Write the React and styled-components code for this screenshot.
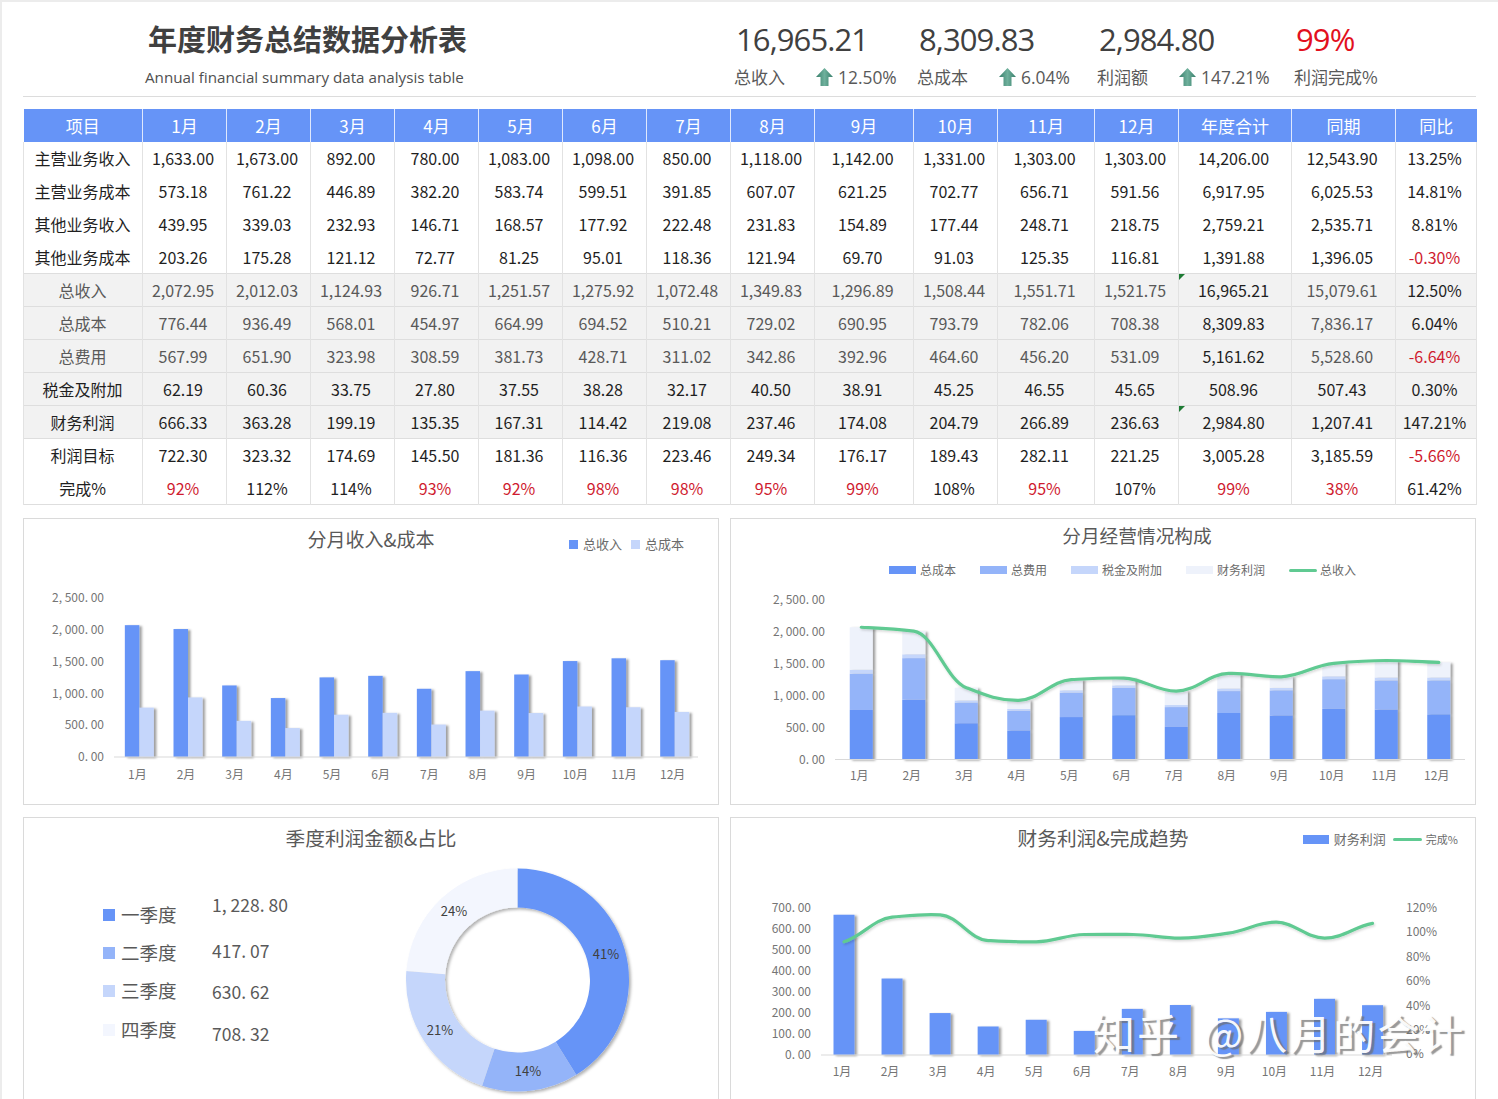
import React from 'react';
import styled, { createGlobalStyle } from 'styled-components';

const FONT = `"Noto Sans CJK SC", "Noto Sans", sans-serif`;
const MONTHS = ['1月','2月','3月','4月','5月','6月','7月','8月','9月','10月','11月','12月'];
const C = { a:'#6694f7', b:'#94b4f9', c:'#c5d6fb', d:'#eef2fb', e:'#f3f6fe', line:'#60ca92' };

const Global = createGlobalStyle`
  html, body { margin:0; padding:0; background:#fff; }
  body { font-family:${FONT}; color:#262626; }
`;
const Page = styled.div`
  position:relative; box-sizing:border-box; width:1498px; height:1099px; overflow:hidden; background:#fff;
  border-top:2px solid #ececec; border-left:2px solid #ececec; padding:0 22px 0 21px;
`;
const Header = styled.header`
  display:flex; height:95px; box-sizing:border-box; border-bottom:1px solid #dcdcdc;
`;
const TitleBlock = styled.div`
  width:711px; box-sizing:border-box; padding:13px 0 0 125px; display:flex; flex-direction:column;
`;
const MainTitle = styled.h1`
  margin:0; font-size:29px; line-height:46px; font-weight:700; color:#404040; white-space:nowrap;
`;
const SubTitle = styled.div`
  margin:5px 0 0 -3px; font:400 15.2px/22px "Open Sans", sans-serif; color:#505050; white-space:nowrap;
`;
const Kpis = styled.div`display:flex;`;
const Kpi = styled.div`
  width:${p=>p.$w}px; display:flex; flex-direction:column; padding-top:15px;
`;
const KpiValue = styled.div`
  margin-left:2px; font:400 31px/44px "Open Sans", ${FONT}; letter-spacing:-.9px;
  color:${p=>p.$red?'#e2101e':'#404040'}; white-space:nowrap;
`;
const KpiRow = styled.div`
  margin-top:4px; display:flex; align-items:center; font-size:17px; line-height:24px; color:#595959; white-space:nowrap;
`;
const KpiLabel = styled.span`width:${p=>p.$w||82}px;`;
const KpiPct = styled.span`margin-left:5px;font:400 17.4px/24px "Open Sans",sans-serif;`;

const Table = styled.table`
  margin-top:12px; width:1453px; table-layout:fixed; border-collapse:collapse; font-size:16px;
`;
const Th = styled.th`
  height:33px; padding:0; background:#6694f7; color:#fff; font-weight:400; font-size:17px;
  border-left:1px solid #dfe8fd; border-right:1px solid #dfe8fd;
  &:first-child{border-left:0;} &:last-child{border-right:0;}
`;
const Tr = styled.tr`
  background:${p=>p.$gray?'#f2f2f2':'#fff'};
  border-bottom:1px solid ${p=>p.$line?'#dedede':'transparent'};
`;
const Td = styled.td`
  position:relative; height:32px; padding:0 3px 0 0; text-align:center; white-space:nowrap; line-height:1;
  border-left:1px solid #e2e2e2; border-right:1px solid #e2e2e2;
  color:${p=>p.$red?'#cf1b2f':p.$muted?'#595959':'#1f1f1f'};
  &:first-child{padding-right:1px;}
`;
const Corner = styled.i`
  position:absolute; left:0; top:0; width:0; height:0;
  border-top:6px solid #1e7b34; border-right:6px solid transparent;
`;
const Charts = styled.div`
  margin-top:13px; display:grid; grid-template-columns:696px 746px; grid-auto-rows:287px; gap:12px 11px;
`;
const Panel = styled.section`
  box-sizing:border-box; border:1px solid #dadada; background:#fff; display:flex; flex-direction:column; overflow:hidden;
`;
const Head = styled.div`
  box-sizing:border-box; display:grid; grid-template-columns:1fr auto 1fr; align-items:start;
  padding:${p=>p.$top}px 0 0 ${p=>p.$shift||0}px; ${p=>p.$h?`height:${p.$h}px;`:''}
`;
const ChartTitle = styled.h2`
  grid-column:2; margin:0; font-size:${p=>p.$size||19}px; line-height:28px; font-weight:400; color:#595959; white-space:nowrap;
`;
const Legend = styled.div`
  display:flex; align-items:center; font-size:13px; line-height:14px; color:#6b6b6b; white-space:nowrap;
`;
const CornerLegend = styled(Legend)`
  grid-column:3; justify-self:end; margin-top:${p=>p.$mt}px; padding-right:${p=>p.$pr}px;
`;
const WideLegend = styled(Legend)`
  margin:14px 0 8px 158px; font-size:12px;
`;
const SmallEntry = styled.span`font-size:11px;`;
const Key = styled.span`
  display:inline-block; width:${p=>p.$w}px; height:${p=>p.$h}px; background:${p=>p.$c}; margin:0 ${p=>p.$gap}px 0 ${p=>p.$ml||0}px; flex:none;
  border-radius:${p=>p.$round?'2px':'0'};
`;
const Plot = styled.svg`display:block; flex:none;`;
const Axis = styled.text`
  font-family:${FONT}; font-size:12px; font-weight:400; fill:#757575;
`;
const Pct = styled.text`
  font-family:${FONT}; font-size:13px; font-weight:400; fill:#404040; text-anchor:middle;
`;
const Big = styled.text`
  font-family:${FONT}; font-size:${p=>p.$size}px; font-weight:400; fill:#595959;
`;
const Watermark = styled.div`
  position:absolute; left:1091px; top:1000px; font-size:42px; line-height:60px; font-weight:400; white-space:nowrap;
  letter-spacing:2px; word-spacing:11px;
  color:rgba(255,255,255,.94); text-shadow:3px 2px 1px rgba(110,110,110,.7);
`;

const R = (label, vals, o={}) => ({ label, vals, ...o });
const rows = [
 R('主营业务收入','1,633.00 1,673.00 892.00 780.00 1,083.00 1,098.00 850.00 1,118.00 1,142.00 1,331.00 1,303.00 1,303.00 14,206.00 12,543.90 13.25%'),
 R('主营业务成本','573.18 761.22 446.89 382.20 583.74 599.51 391.85 607.07 621.25 702.77 656.71 591.56 6,917.95 6,025.53 14.81%'),
 R('其他业务收入','439.95 339.03 232.93 146.71 168.57 177.92 222.48 231.83 154.89 177.44 248.71 218.75 2,759.21 2,535.71 8.81%'),
 R('其他业务成本','203.26 175.28 121.12 72.77 81.25 95.01 118.36 121.94 69.70 91.03 125.35 116.81 1,391.88 1,396.05 -0.30%',{line:1}),
 R('总收入','2,072.95 2,012.03 1,124.93 926.71 1,251.57 1,275.92 1,072.48 1,349.83 1,296.89 1,508.44 1,551.71 1,521.75 16,965.21 15,079.61 12.50%',{gray:1,line:1,muted:1,mark:1}),
 R('总成本','776.44 936.49 568.01 454.97 664.99 694.52 510.21 729.02 690.95 793.79 782.06 708.38 8,309.83 7,836.17 6.04%',{gray:1,line:1,muted:1}),
 R('总费用','567.99 651.90 323.98 308.59 381.73 428.71 311.02 342.86 392.96 464.60 456.20 531.09 5,161.62 5,528.60 -6.64%',{gray:1,line:1,muted:1}),
 R('税金及附加','62.19 60.36 33.75 27.80 37.55 38.28 32.17 40.50 38.91 45.25 46.55 45.65 508.96 507.43 0.30%',{gray:1,line:1}),
 R('财务利润','666.33 363.28 199.19 135.35 167.31 114.42 219.08 237.46 174.08 204.79 266.89 236.63 2,984.80 1,207.41 147.21%',{gray:1,line:1,mark:1}),
 R('利润目标','722.30 323.32 174.69 145.50 181.36 116.36 223.46 249.34 176.17 189.43 282.11 221.25 3,005.28 3,185.59 -5.66%'),
 R('完成%','92% 112% 114% 93% 92% 98% 98% 95% 99% 108% 95% 107% 99% 38% 61.42%',{line:1,done:1}),
].map(r=>({...r, vals:r.vals.split(' ')}));
const heads = ['项目',...MONTHS,'年度合计','同期','同比'];
const widths = [119,84,84,84,84,84,84,84,84,99,84,97,84,113,104,81];

const num = s => parseFloat(s.replace(/,/g,''));
const revenue = rows[4].vals.slice(0,12).map(num);
const cost = rows[5].vals.slice(0,12).map(num);
const fee = rows[6].vals.slice(0,12).map(num);
const tax = rows[7].vals.slice(0,12).map(num);
const profit = rows[8].vals.slice(0,12).map(num);
const done = rows[10].vals.slice(0,12).map(num);

// Monotone cubic through the data points: flat where the trend turns, as the reference's smooth lines are
const smooth = pts => {
  const n = pts.length;
  const sl = pts.slice(1).map((p,i)=>(p[1]-pts[i][1])/(p[0]-pts[i][0]));
  const t = pts.map((_,i)=>{
    if(i===0) return sl[0]*.6;
    if(i===n-1) return sl[n-2]*.6;
    const a=sl[i-1], b=sl[i];
    if(a*b<=0) return (a+b)*.12;
    return 2*a*b/(a+b);
  });
  return pts.reduce((d,p,i)=>{
    if(i===0) return `M${p[0]} ${p[1]}`;
    const q=pts[i-1], h=(p[0]-q[0])/2.6;
    return `${d} C${(q[0]+h).toFixed(1)} ${(q[1]+t[i-1]*h).toFixed(1)} ${(p[0]-h).toFixed(1)} ${(p[1]-t[i]*h).toFixed(1)} ${p[0].toFixed(1)} ${p[1].toFixed(1)}`;
  },'');
};

const Shadow = ({id}) => (
  <filter id={id} x="-40%" y="-10%" width="190%" height="125%">
    <feDropShadow dx="2.5" dy="1" stdDeviation="1.2" floodColor="#000" floodOpacity=".38"/>
  </filter>
);
const LineShadow = ({id}) => (
  <filter id={id} x="-5%" y="-20%" width="110%" height="150%">
    <feDropShadow dx="1" dy="1.5" stdDeviation="1" floodColor="#000" floodOpacity=".16"/>
  </filter>
);

const Arrow = () => (
  <svg width="17" height="18" viewBox="0 0 17 18" style={{flex:'none'}}>
    <defs><linearGradient id="ag"><stop offset="0" stopColor="#387f6b"/><stop offset=".5" stopColor="#6fb09c"/><stop offset="1" stopColor="#387f6b"/></linearGradient></defs>
    <path d="M8.5 0 L17 9 L12.5 9 L12.5 18 L4.5 18 L4.5 9 L0 9 Z" fill="url(#ag)"/>
  </svg>
);

const KpiCell = ({w,lw,value,label,pct,red}) => (
  <Kpi $w={w}>
    <KpiValue $red={red}>{value}</KpiValue>
    <KpiRow>
      <KpiLabel $w={lw}>{label}</KpiLabel>
      {pct && <Arrow/>}
      {pct && <KpiPct>{pct}</KpiPct>}
    </KpiRow>
  </Kpi>
);

const YLabels = ({items,x,anchor='end'}) => items.map(([t,y])=><Axis key={t} x={x} y={y+4} textAnchor={anchor}>{t}</Axis>);
const XLabels = ({cx,y}) => MONTHS.map((m,i)=><Axis key={m} x={cx(i)} y={y} textAnchor="middle">{m}</Axis>);

const Chart1 = () => {
  const Y = v => 757 - v*0.0636, cx = i => 114+48.67*(i+.5);
  return (
    <Plot width="694" height="229" viewBox="24 575 694 229">
      <defs><Shadow id="s1"/></defs>
      <YLabels x={104} items={[['2, 500. 00',598],['2, 000. 00',630],['1, 500. 00',662],['1, 000. 00',693.5],['500. 00',725],['0. 00',757]]}/>
      <g filter="url(#s1)">
        {revenue.map((v,i)=><rect key={i} x={cx(i)-13.5} y={Y(v)} width="14.5" height={757-Y(v)} fill={C.a}/>)}
      </g>
      <g filter="url(#s1)">
        {cost.map((v,i)=><rect key={i} x={cx(i)+1} y={Y(v)} width="14.5" height={757-Y(v)} fill={C.c}/>)}
      </g>
      <line x1="114" x2="698" y1="757" y2="757" stroke="#d9d9d9"/>
      <XLabels cx={i=>cx(i)-1} y={779}/>
    </Plot>
  );
};

const Chart2 = () => {
  const Y0 = 759.5, s = 0.0638, cx = i => 835+52.5*(i+.5);
  const series = [[cost,C.a],[fee,C.b],[tax,C.c],[profit,C.d]];
  return (
    <Plot width="744" height="219" viewBox="731 585 744 219">
      <defs><Shadow id="s2"/><LineShadow id="l2"/></defs>
      <YLabels x={825} items={[['2, 500. 00',600],['2, 000. 00',632],['1, 500. 00',664],['1, 000. 00',696],['500. 00',728],['0. 00',760]]}/>
      {MONTHS.map((m,i)=>{
        let base = 0;
        return <g key={m} filter="url(#s2)">{series.map(([arr,col],j)=>{
          const y = Y0-(base+arr[i])*s, h = arr[i]*s; base+=arr[i];
          return <rect key={j} x={cx(i)-11.5} y={y} width="23" height={h} fill={col}/>;
        })}</g>;
      })}
      <line x1="835" x2="1465" y1="759.5" y2="759.5" stroke="#d9d9d9"/>
      <path d={smooth(revenue.map((v,i)=>[cx(i),Y0-v*s]))} fill="none" stroke={C.line} strokeWidth="3.2" strokeLinecap="round" filter="url(#l2)"/>
      <XLabels cx={i=>cx(i)-2} y={780}/>
    </Plot>
  );
};

const Chart4 = () => {
  const Y0 = 1055, cx = i => 844+48.05*i, Y = v => Y0 - v*0.2105, P = v => Y0 - v*1.23;
  return (
    <Plot width="744" height="243" viewBox="731 860 744 243">
      <defs><Shadow id="s4"/><LineShadow id="l4"/></defs>
      <YLabels x={811} items={[['700. 00',907.5],['600. 00',928.5],['500. 00',949.5],['400. 00',970.5],['300. 00',991.5],['200. 00',1012.5],['100. 00',1033.5],['0. 00',1055]]}/>
      <g filter="url(#s4)">
        {profit.map((v,i)=><rect key={i} x={cx(i)-10.5} y={Y(v)} width="21" height={Y0-Y(v)} fill={C.a}/>)}
      </g>
      <line x1="821" x2="1392" y1="1055" y2="1055" stroke="#d9d9d9"/>
      <path d={smooth(done.map((v,i)=>[cx(i),P(v)]))} fill="none" stroke={C.line} strokeWidth="3.2" strokeLinecap="round" filter="url(#l4)"/>
      <YLabels x={1406} anchor="start" items={[['120%',907.5],['100%',932],['80%',956.5],['60%',981],['40%',1005.5],['20%',1030],['0%',1054]]}/>
      <XLabels cx={i=>cx(i)-2} y={1076}/>
    </Plot>
  );
};

const sector = (a0,a1,cx,cy,ro,ri) => {
  const pt=(a,r)=>[cx+r*Math.sin(a*2*Math.PI),cy-r*Math.cos(a*2*Math.PI)].map(n=>n.toFixed(2)).join(' ');
  const large = a1-a0>.5?1:0;
  return `M${pt(a0,ro)} A${ro} ${ro} 0 ${large} 1 ${pt(a1,ro)} L${pt(a1,ri)} A${ri} ${ri} 0 ${large} 0 ${pt(a0,ri)} Z`;
};
const quarters = [
  ['一季度','1, 228. 80',C.a,.4117,915,905],
  ['二季度','417. 07',C.b,.1397,953,951],
  ['三季度','630. 62',C.c,.2113,991,992],
  ['四季度','708. 32',C.e,.2373,1030,1034],
];
const Chart3 = () => {
  let acc = 0;
  return (
    <Plot width="694" height="243" viewBox="24 860 694 243">
      <defs><filter id="s3" x="-10%" y="-10%" width="125%" height="125%"><feDropShadow dx="2" dy="2" stdDeviation="1.6" floodColor="#000" floodOpacity=".3"/></filter></defs>
      {quarters.map(([n,v,c,,ly,vy])=>(
        <g key={n}>
          <rect x="103" y={ly-6} width="12" height="12" fill={c}/>
          <Big $size={18.5} x="121" y={ly+7}>{n}</Big>
          <Big $size={17.5} x="212" y={vy+7}>{v}</Big>
        </g>
      ))}
      <g filter="url(#s3)">
        {quarters.map(([n,,c,f])=>{ const d = sector(acc,acc+f,517.5,980,111.5,72.5); acc+=f; return <path key={n} d={d} fill={c}/>; })}
      </g>
      <Pct x="606" y="959">41%</Pct>
      <Pct x="528" y="1076">14%</Pct>
      <Pct x="440" y="1035">21%</Pct>
      <Pct x="454" y="916">24%</Pct>
    </Plot>
  );
};

export default function App(){
  return (
    <Page>
      <Global/>
      <Header>
        <TitleBlock>
          <MainTitle>年度财务总结数据分析表</MainTitle>
          <SubTitle>Annual financial summary data analysis table</SubTitle>
        </TitleBlock>
        <Kpis>
          <KpiCell w={183} value="16,965.21" label="总收入" pct="12.50%"/>
          <KpiCell w={180} value="8,309.83" label="总成本" pct="6.04%"/>
          <KpiCell w={197} value="2,984.80" label="利润额" pct="147.21%"/>
          <KpiCell w={120} value="99%" label="利润完成%" lw={100} red/>
        </Kpis>
      </Header>
      <Table>
        <colgroup>{widths.map((w,i)=><col key={i} style={{width:w}}/>)}</colgroup>
        <thead><tr>{heads.map(h=><Th key={h}>{h}</Th>)}</tr></thead>
        <tbody>
          {rows.map(r=>(
            <Tr key={r.label} $gray={r.gray} $line={r.line}>
              <Td $muted={r.muted}>{r.label}</Td>
              {r.vals.map((v,i)=>{
                const red = v.startsWith('-') || (r.done && i<14 && parseFloat(v)<100);
                const muted = r.muted && i!==12 && i!==14;
                return <Td key={i} $red={red} $muted={muted}>{r.mark && i===12 && <Corner/>}{v}</Td>;
              })}
            </Tr>
          ))}
        </tbody>
      </Table>
      <Charts>
        <Panel>
          <Head $top={6} $h={56}>
            <ChartTitle>分月收入&amp;成本</ChartTitle>
            <CornerLegend $mt={12} $pr={34}>
              <Key $w={9} $h={9} $c={C.a} $gap={5}/>总收入
              <Key $w={9} $h={9} $c={C.c} $gap={5} $ml={9}/>总成本
            </CornerLegend>
          </Head>
          <Chart1/>
        </Panel>
        <Panel>
          <Head $top={2} $shift={68}><ChartTitle $size={18.7}>分月经营情况构成</ChartTitle></Head>
          <WideLegend>
            <Key $w={27} $h={8} $c={C.a} $gap={4}/>总成本
            <Key $w={27} $h={8} $c={C.b} $gap={4} $ml={24}/>总费用
            <Key $w={27} $h={8} $c={C.c} $gap={4} $ml={24}/>税金及附加
            <Key $w={27} $h={8} $c={C.d} $gap={4} $ml={24}/>财务利润
            <Key $w={28} $h={3} $c={C.line} $gap={3} $ml={24} $round/>总收入
          </WideLegend>
          <Chart2/>
        </Panel>
        <Panel>
          <Head $top={6} $h={42}><ChartTitle $size={19.7}>季度利润金额&amp;占比</ChartTitle></Head>
          <Chart3/>
        </Panel>
        <Panel>
          <Head $top={6} $h={42}>
            <ChartTitle $size={19.7}>财务利润&amp;完成趋势</ChartTitle>
            <CornerLegend $mt={8} $pr={17}>
              <Key $w={26} $h={9} $c={C.a} $gap={5}/>财务利润
              <Key $w={29} $h={3} $c={C.line} $gap={4} $ml={7} $round/><SmallEntry>完成%</SmallEntry>
            </CornerLegend>
          </Head>
          <Chart4/>
        </Panel>
      </Charts>
      <Watermark>知乎 @八月的会计</Watermark>
    </Page>
  );
}
